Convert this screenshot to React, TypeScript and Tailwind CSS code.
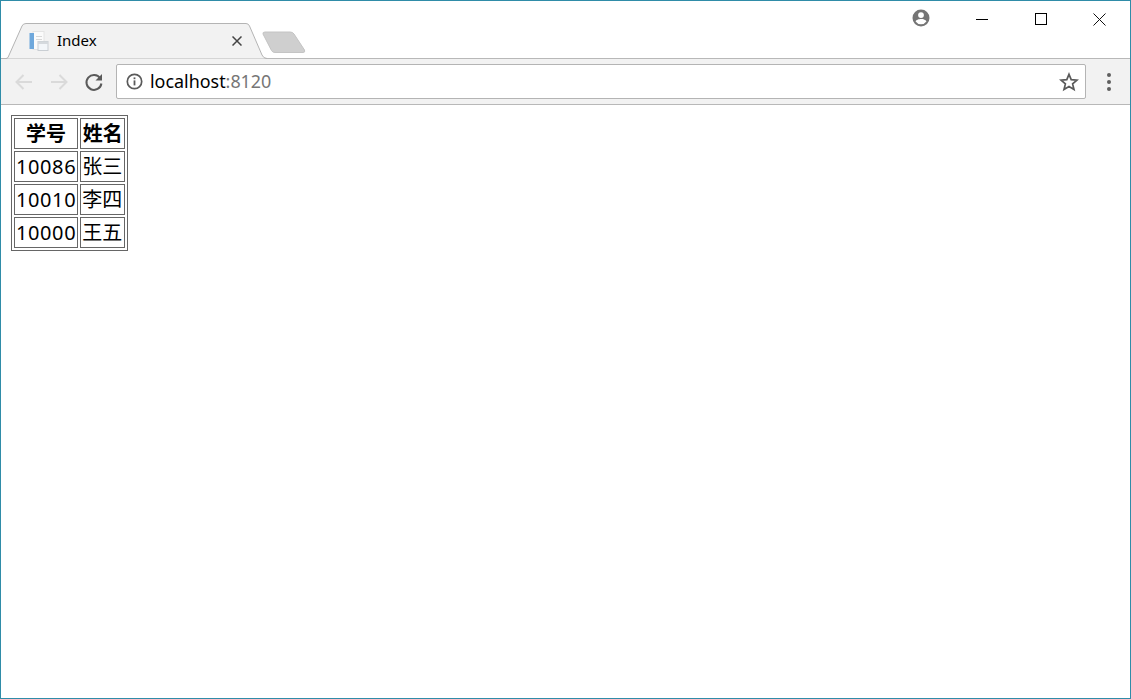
export default function App() {
  const rows = [
    ["10086", "张三"],
    ["10010", "李四"],
    ["10000", "王五"],
  ];
  const cjk = "font-['Noto_Sans','Noto_Sans_CJK_SC',sans-serif]";
  return (
    <div className={`h-[699px] w-full border border-[#2f8ca8] bg-white flex flex-col ${cjk}`}>
      {/* title bar */}
      <div className="h-[57px] flex shrink-0 relative z-10">
        <div className="relative mt-[22px] w-[267px] h-[35px] flex items-center pl-[28px]">
          <svg className="absolute left-0 top-0" width="267" height="37" viewBox="0 0 267 37">
            <path d="M0 35.5 L5 35.5 Q6.5 35.5 7.2 34 L21 3 Q22 0.5 25 0.5 L245 0.5 Q247.5 0.5 248.5 3 L261 32 Q262.5 35.5 266 35.5" fill="#f2f2f2" stroke="#b4b4b4" strokeWidth="1" />
            <rect x="8" y="36" width="254" height="1" fill="#f2f2f2" />
          </svg>
          <svg className="relative shrink-0" width="20" height="20" viewBox="0 0 20 20">
            <rect x="4" y="0.5" width="11" height="18" fill="#fbfbfb" stroke="#e4e4e4" strokeWidth="1" />
            <rect x="0.5" y="2" width="4.5" height="16" fill="#6fa8dc" />
            <rect x="7" y="5" width="6" height="1" fill="#d8d8d8" />
            <rect x="7" y="8" width="6" height="1" fill="#d8d8d8" />
            <rect x="9" y="10.5" width="10" height="9" fill="#f3f6f9" stroke="#c9ced3" strokeWidth="1" />
            <rect x="9" y="10.5" width="10" height="2.5" fill="#d5d9dd" />
          </svg>
          <span className="relative ml-[8px] text-[15px] leading-none text-black font-['Noto_Sans',sans-serif]">Index</span>
          <svg className="absolute left-[231px] top-[13px]" width="10" height="10" viewBox="0 0 10 10">
            <path d="M0.5 0.5 L9.5 9.5 M9.5 0.5 L0.5 9.5" stroke="#444" strokeWidth="1.5" />
          </svg>
        </div>
        <svg className="mt-[30px] -ml-[6px]" width="44" height="24" viewBox="0 0 44 24">
          <path d="M3 1 L28 1 Q31 1 32 3 L42.5 19 Q43.5 21.5 41 21.5 L13 21.5 Q10.5 21.5 9.5 19.5 L1 3 Q0.5 1 3 1 Z" fill="#cfcfcf" stroke="#c4c4c4" strokeWidth="1" />
        </svg>
        <div className="flex-1" />
        <svg className="mt-[8px] mr-[23px]" width="18" height="18" viewBox="0 0 18 18">
          <path fillRule="evenodd" d="M9 0.5 A8.5 8.5 0 1 0 9 17.5 A8.5 8.5 0 1 0 9 0.5 Z M9 3.2 A2.9 2.9 0 1 1 9 9 A2.9 2.9 0 1 1 9 3.2 Z M9 15.2 A6.6 6.6 0 0 1 3.6 12.4 C3.7 10.8 7 9.9 9 9.9 C11 9.9 14.3 10.8 14.4 12.4 A6.6 6.6 0 0 1 9 15.2 Z" fill="#757575" />
        </svg>
        <div className="w-[58px] h-[36px] flex items-center justify-center">
          <div className="w-[12px] h-px bg-black" />
        </div>
        <div className="w-[60px] h-[36px] flex items-center justify-center">
          <div className="w-[12px] h-[12px] border border-black" />
        </div>
        <div className="w-[59px] h-[36px] flex items-center justify-center pr-[2px]">
          <svg width="13" height="13" viewBox="0 0 13 13">
            <path d="M0.5 0.5 L12.5 12.5 M12.5 0.5 L0.5 12.5" stroke="#111" strokeWidth="1" />
          </svg>
        </div>
      </div>
      {/* toolbar */}
      <div className="h-[47px] shrink-0 flex items-center bg-[#f2f2f2] border-t border-b border-[#b8b8b8] pl-[13px] pr-[19px]">
        <svg width="20" height="20" viewBox="0 0 20 20">
          <path d="M18 10 H3 M9.5 3 L2.5 10 L9.5 17" fill="none" stroke="#dadada" strokeWidth="2" />
        </svg>
        <svg className="ml-[15px]" width="20" height="20" viewBox="0 0 20 20">
          <path d="M2 10 H17 M10.5 3 L17.5 10 L10.5 17" fill="none" stroke="#dadada" strokeWidth="2" />
        </svg>
        <svg className="ml-[15px]" width="20" height="20" viewBox="0 0 20 20">
          <path d="M16.2 6.2 A7.5 7.5 0 1 0 17.4 11.5" fill="none" stroke="#5a5a5a" strokeWidth="2" />
          <path d="M18 2 V8.5 H11.5 Z" fill="#5a5a5a" />
        </svg>
        <div className="ml-[12px] flex-1 h-[35px] bg-white border border-[#b4b4b4] rounded-[2px] flex items-center pl-[9px] pr-[6px]">
          <svg width="17" height="17" viewBox="0 0 17 17">
            <circle cx="8.5" cy="8.5" r="7.2" fill="none" stroke="#5a5a5a" strokeWidth="1.7" />
            <rect x="7.6" y="7.4" width="1.8" height="5" fill="#5a5a5a" />
            <rect x="7.6" y="4.4" width="1.8" height="1.8" fill="#5a5a5a" />
          </svg>
          <span className="ml-[7px] text-[17.9px] leading-none text-black">
            localhost<span className="text-[#767676]">:8120</span>
          </span>
          <div className="flex-1" />
          <svg width="20" height="20" viewBox="0 0 20 20">
            <path d="M10 2.3 L12.2 7.6 L18 8.1 L13.6 11.9 L15 17.5 L10 14.5 L5 17.5 L6.4 11.9 L2 8.1 L7.8 7.6 Z" fill="none" stroke="#5a5a5a" strokeWidth="1.7" strokeLinejoin="miter" />
          </svg>
        </div>
        <div className="ml-[21px] w-[4px] flex flex-col gap-[3px]">
          <div className="w-[4px] h-[4px] rounded-full bg-[#5f5f5f]" />
          <div className="w-[4px] h-[4px] rounded-full bg-[#5f5f5f]" />
          <div className="w-[4px] h-[4px] rounded-full bg-[#5f5f5f]" />
        </div>
      </div>
      {/* page */}
      <div className="flex-1 pt-[10px] pl-[10px]">
        <table className="border border-[#666] border-separate border-spacing-[2px] text-[20px] leading-[29px] text-black">
          <thead>
            <tr>
              <th className="border border-[#666] px-px h-[31px] font-bold text-center">学号</th>
              <th className="border border-[#666] px-px h-[31px] w-[45px] font-bold text-center">姓名</th>
            </tr>
          </thead>
          <tbody>
            {rows.map(([id, name]) => (
              <tr key={id}>
                <td className="border border-[#666] px-px h-[31px] tracking-[0.6px]">{id}</td>
                <td className="border border-[#666] px-px h-[31px] w-[45px]">{name}</td>
              </tr>
            ))}
          </tbody>
        </table>
      </div>
    </div>
  );
}
